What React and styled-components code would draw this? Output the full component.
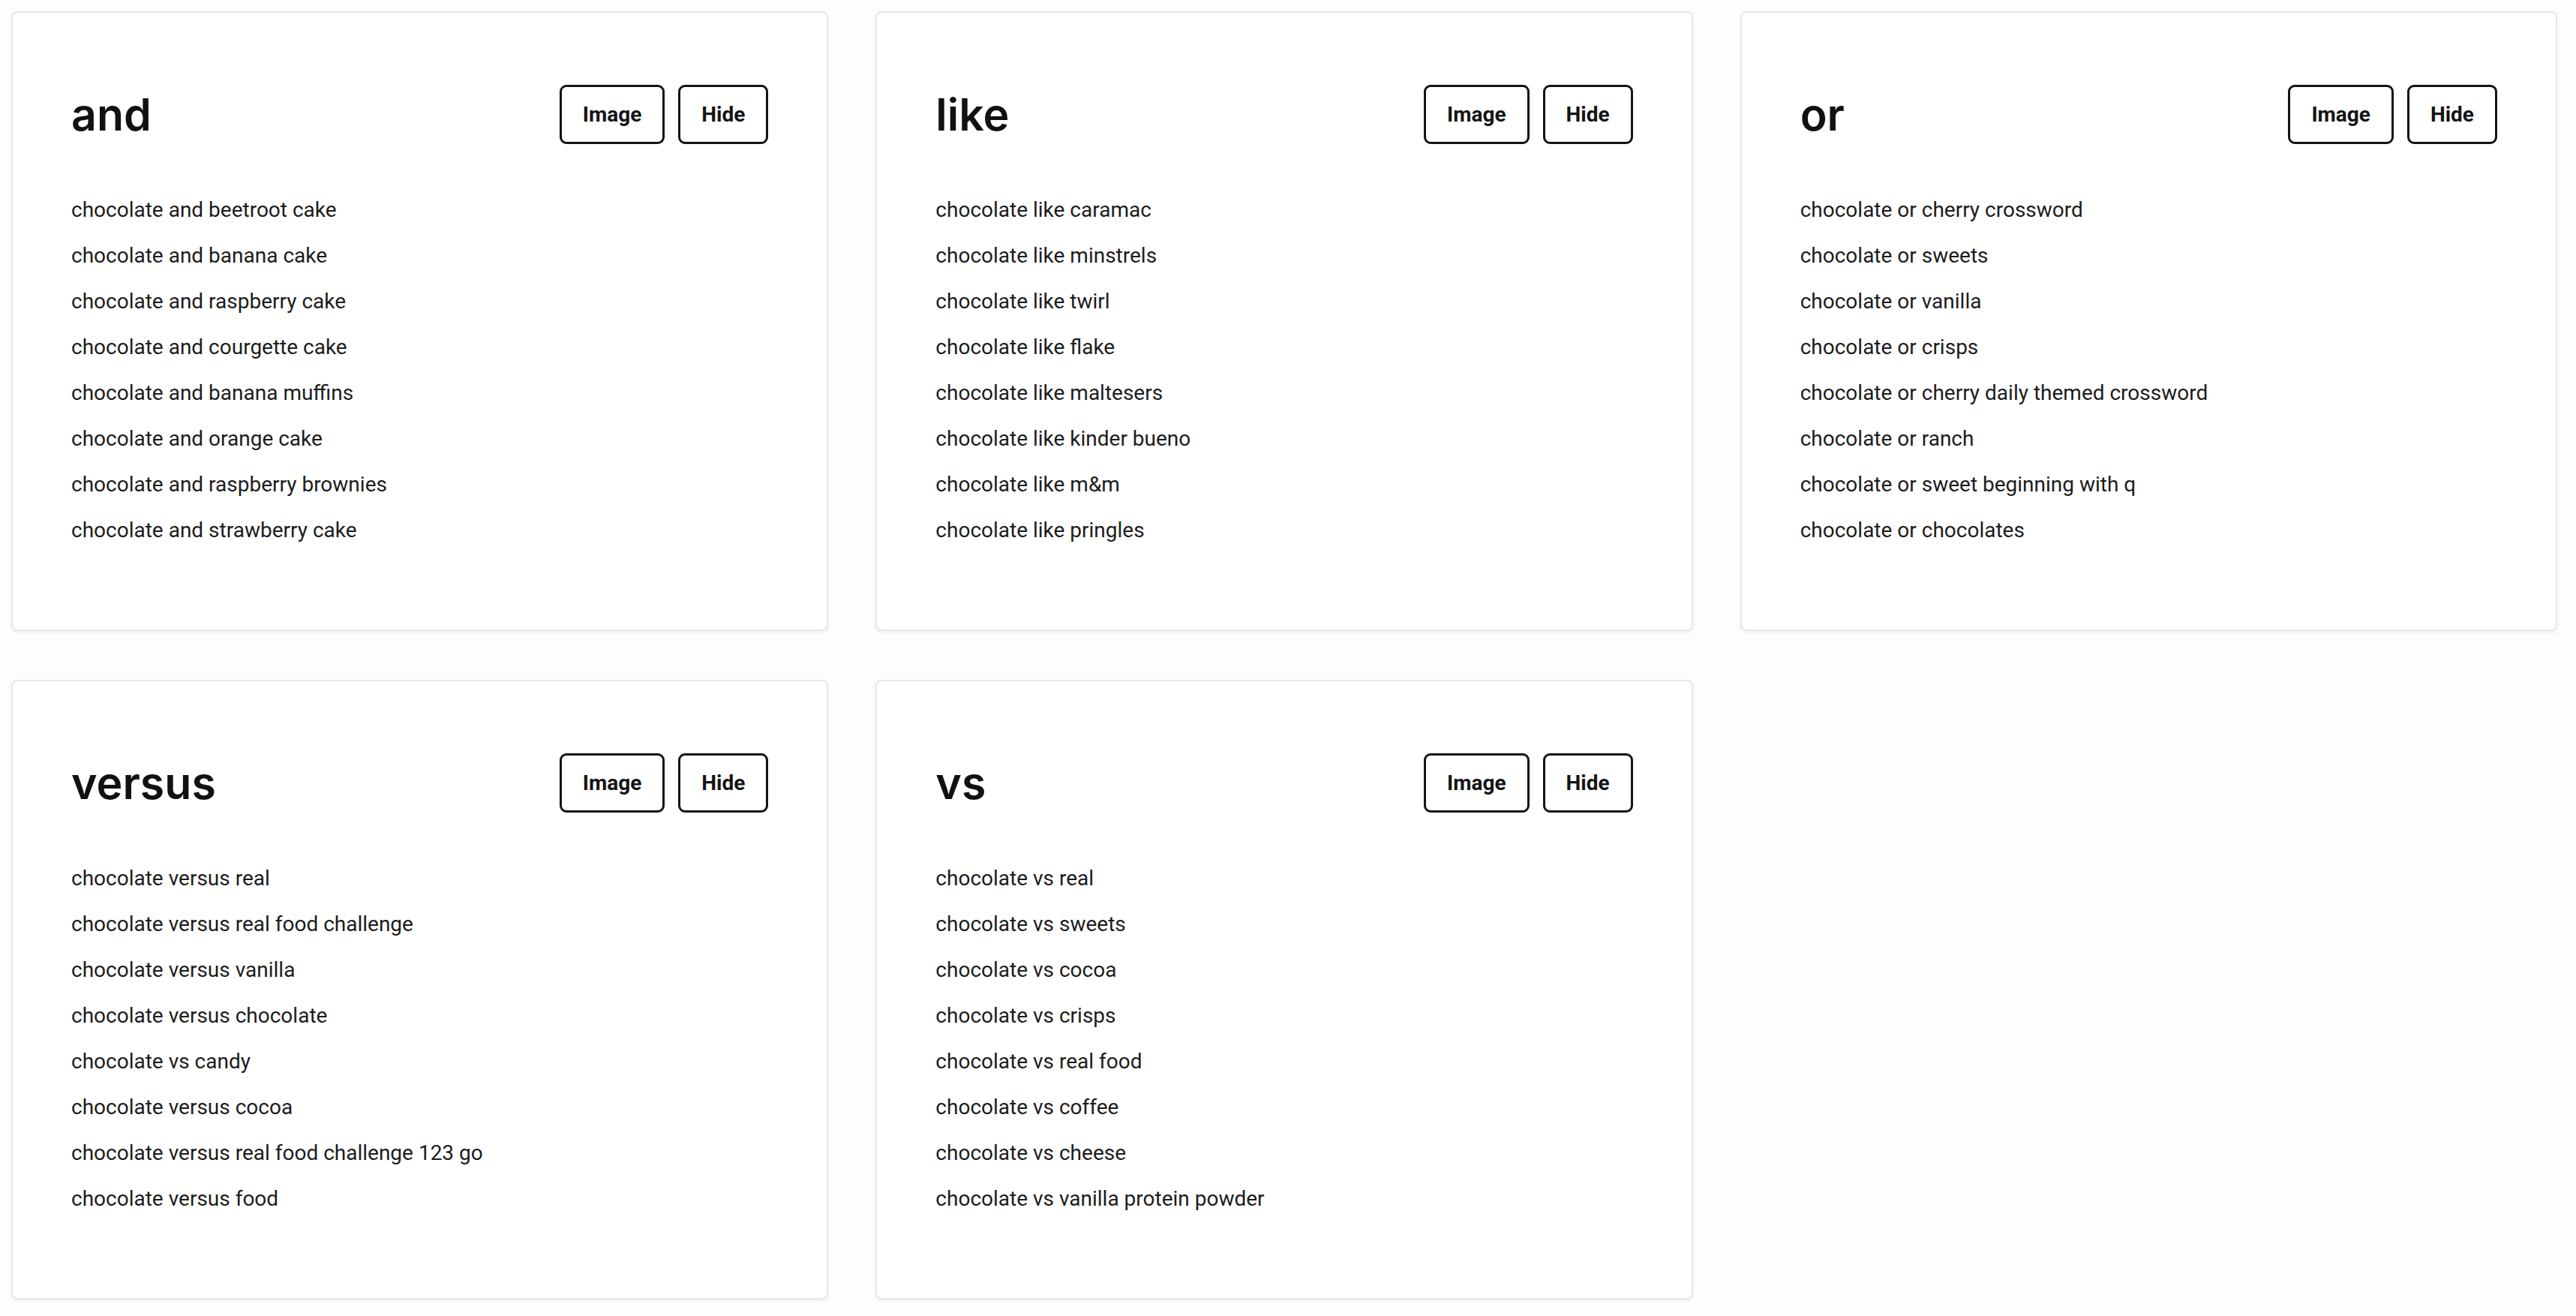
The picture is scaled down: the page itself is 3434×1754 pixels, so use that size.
import React from "react";
import styled, { createGlobalStyle } from "styled-components";

const Global = createGlobalStyle`
  html, body { margin: 0; padding: 0; background: #fdfdfd; }
  body { font-family: Roboto, "Liberation Sans", sans-serif; color: #1a1a1a; }
  * { box-sizing: border-box; }
`;

const Grid = styled.main`
  display: grid;
  grid-template-columns: repeat(3, 1fr);
  column-gap: 63px;
  row-gap: 65px;
  padding: 15px 25px 15px 15px;
  align-items: start;
`;

const Card = styled.section`
  background: #ffffff;
  border: 2px solid #e7e7e7;
  border-radius: 8px;
  box-shadow: 0 2px 4px rgba(0, 0, 0, 0.06);
  padding: 78px 78px 102px 78px;
  display: flex;
  flex-direction: column;
`;

const Header = styled.header`
  display: flex;
  align-items: center;
  justify-content: space-between;
  height: 114px;
  margin-bottom: 40px;
`;

const Title = styled.h2`
  margin: 0;
  font-family: Inter, "Liberation Sans", sans-serif;
  font-size: 59px;
  font-weight: 600;
  color: #111111;
  line-height: 1;
  letter-spacing: 0;
`;

const Actions = styled.div`
  display: flex;
  gap: 18px;
`;

const Button = styled.button`
  height: 79px;
  padding: 0 28px;
  border: 3px solid #141414;
  border-radius: 9px;
  background: #ffffff;
  color: #141414;
  font-family: Roboto, "Liberation Sans", sans-serif;
  font-size: 28px;
  font-weight: 700;
  cursor: pointer;
`;

const List = styled.ul`
  list-style: none;
  margin: 0;
  padding: 0;
`;

const Item = styled.li`
  font-size: 28px;
  line-height: 61px;
  height: 61px;
  color: #1c1c1c;
  white-space: nowrap;
`;

const data = [
  {
    title: "and",
    items: [
      "chocolate and beetroot cake",
      "chocolate and banana cake",
      "chocolate and raspberry cake",
      "chocolate and courgette cake",
      "chocolate and banana muffins",
      "chocolate and orange cake",
      "chocolate and raspberry brownies",
      "chocolate and strawberry cake",
    ],
  },
  {
    title: "like",
    items: [
      "chocolate like caramac",
      "chocolate like minstrels",
      "chocolate like twirl",
      "chocolate like flake",
      "chocolate like maltesers",
      "chocolate like kinder bueno",
      "chocolate like m&m",
      "chocolate like pringles",
    ],
  },
  {
    title: "or",
    items: [
      "chocolate or cherry crossword",
      "chocolate or sweets",
      "chocolate or vanilla",
      "chocolate or crisps",
      "chocolate or cherry daily themed crossword",
      "chocolate or ranch",
      "chocolate or sweet beginning with q",
      "chocolate or chocolates",
    ],
  },
  {
    title: "versus",
    items: [
      "chocolate versus real",
      "chocolate versus real food challenge",
      "chocolate versus vanilla",
      "chocolate versus chocolate",
      "chocolate vs candy",
      "chocolate versus cocoa",
      "chocolate versus real food challenge 123 go",
      "chocolate versus food",
    ],
  },
  {
    title: "vs",
    items: [
      "chocolate vs real",
      "chocolate vs sweets",
      "chocolate vs cocoa",
      "chocolate vs crisps",
      "chocolate vs real food",
      "chocolate vs coffee",
      "chocolate vs cheese",
      "chocolate vs vanilla protein powder",
    ],
  },
];

export default function App() {
  return (
    <>
      <Global />
      <Grid>
        {data.map((group) => (
          <Card key={group.title}>
            <Header>
              <Title>{group.title}</Title>
              <Actions>
                <Button>Image</Button>
                <Button>Hide</Button>
              </Actions>
            </Header>
            <List>
              {group.items.map((it) => (
                <Item key={it}>{it}</Item>
              ))}
            </List>
          </Card>
        ))}
      </Grid>
    </>
  );
}
